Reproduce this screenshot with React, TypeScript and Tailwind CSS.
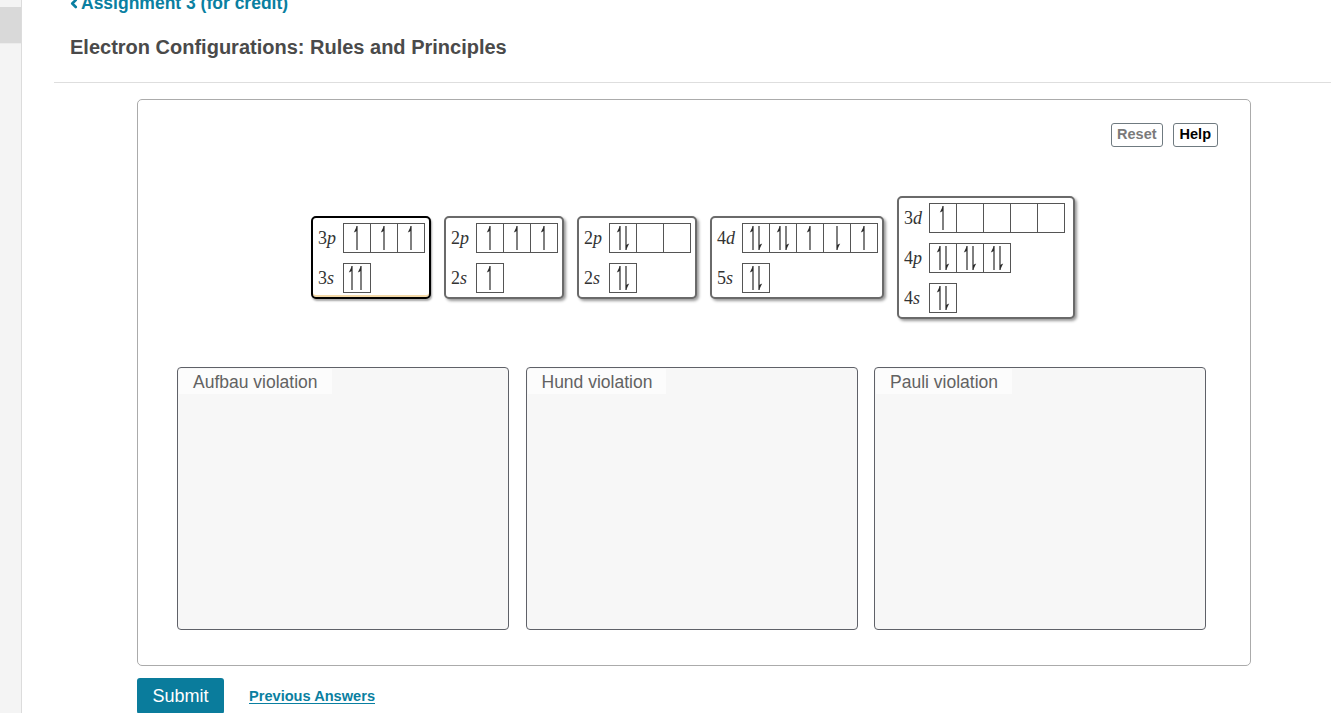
import React from 'react';
import { ChevronLeft } from 'lucide-react';

type Spin = '' | 'u' | 'd' | 'ud' | 'uu';

type Row = { n: string; l: string; boxes: Spin[] };

type TileDef = { rows: Row[]; selected?: boolean; extraRight?: boolean };

const tiles: TileDef[] = [
  {
    selected: true,
    rows: [
      { n: '3', l: 'p', boxes: ['u', 'u', 'u'] },
      { n: '3', l: 's', boxes: ['uu'] },
    ],
  },
  {
    rows: [
      { n: '2', l: 'p', boxes: ['u', 'u', 'u'] },
      { n: '2', l: 's', boxes: ['u'] },
    ],
  },
  {
    rows: [
      { n: '2', l: 'p', boxes: ['ud', '', ''] },
      { n: '2', l: 's', boxes: ['ud'] },
    ],
  },
  {
    rows: [
      { n: '4', l: 'd', boxes: ['ud', 'ud', 'u', 'd', 'u'] },
      { n: '5', l: 's', boxes: ['ud'] },
    ],
  },
  {
    extraRight: true,
    rows: [
      { n: '3', l: 'd', boxes: ['u', '', '', '', ''] },
      { n: '4', l: 'p', boxes: ['ud', 'ud', 'ud'] },
      { n: '4', l: 's', boxes: ['ud'] },
    ],
  },
];

const zones = ['Aufbau violation', 'Hund violation', 'Pauli violation'];

// half-headed arrows, like the textbook orbital boxes
const Up = ({ x }: { x: number }) => (
  <g>
    <line x1={x} y1={3} x2={x} y2={27} stroke="#2b2b2b" strokeWidth={1.2} />
    <path d={`M${x} 3 L${x - 3.2} 9.5 L${x} 8 Z`} fill="#2b2b2b" />
  </g>
);

const Down = ({ x }: { x: number }) => (
  <g>
    <line x1={x} y1={3} x2={x} y2={27} stroke="#2b2b2b" strokeWidth={1.2} />
    <path d={`M${x} 27 L${x + 3.2} 20.5 L${x} 22 Z`} fill="#2b2b2b" />
  </g>
);

const OrbitalBox = ({ spin, first }: { spin: Spin; first: boolean }) => (
  <div
    className={`w-[28px] h-[30px] border border-[#555] bg-white ${first ? '' : '-ml-px'}`}
  >
    <svg width="26" height="28" viewBox="1 1 26 28">
      {spin === 'u' && <Up x={14} />}
      {spin === 'd' && <Down x={14} />}
      {spin === 'ud' && (
        <>
          <Up x={11} />
          <Down x={17} />
        </>
      )}
      {spin === 'uu' && (
        <>
          <Up x={9} />
          <Up x={18} />
        </>
      )}
    </svg>
  </div>
);

const Tile = ({ tile }: { tile: TileDef }) => (
  <div
    className={`bg-white rounded-[5px] border-2 pt-[5px] pb-[4px] pl-[4px] ${
      tile.extraRight ? 'pr-[8px]' : 'pr-[4px]'
    } ${
      tile.selected
        ? 'border-black shadow-[inset_0_-2px_0_#f3d9a8,1px_2px_2px_rgba(0,0,0,0.35)]'
        : 'border-[#6a6a6a] shadow-[2px_2px_3px_rgba(0,0,0,0.4)]'
    }`}
  >
    <div className="flex flex-col gap-[10px]">
      {tile.rows.map((row, i) => (
        <div key={i} className="flex items-center">
          <div
            className="w-[26px] pl-[1px] text-[18px] text-[#333] leading-none"
            style={{ fontFamily: '"Liberation Serif", "DejaVu Serif", serif' }}
          >
            {row.n}
            <i>{row.l}</i>
          </div>
          <div className="flex">
            {row.boxes.map((s, j) => (
              <OrbitalBox key={j} spin={s} first={j === 0} />
            ))}
          </div>
        </div>
      ))}
    </div>
  </div>
);

const App: React.FC = () => {
  return (
    <div
      className="flex h-[713px] overflow-hidden bg-white"
      style={{ fontFamily: '"Liberation Sans", Arial, sans-serif' }}
    >
      {/* left rail */}
      <aside className="w-[22px] shrink-0 bg-[#f4f4f4] border-r border-[#dcdcdc]">
        <div className="mt-[7px] h-[37px] bg-[#d9d9d9] border-b border-[#ececec]" />
      </aside>

      <main className="flex-1 pl-[32px]">
        <div className="pl-[16px]">
          <a className="-mt-[7px] h-[20px] flex items-center text-[17.5px] leading-[20px] font-bold text-[#0a7fa1]">
            <ChevronLeft className="w-[14px] h-[17px] -ml-[3px] mr-[0px]" strokeWidth={4.5} />
            Assignment 3 (for credit)
          </a>
          <h1 className="mt-[22px] text-[20px] leading-[24px] font-bold text-[#4a4a4a]">
            Electron Configurations: Rules and Principles
          </h1>
        </div>

        <div className="mt-[23px] border-t border-[#dedede]" />

        <div className="ml-[83px] mr-[80px] mt-[16px]">
          <div className="border border-[#ababab] rounded-[5px] pt-[23px] pb-[35px]">
            <div className="flex justify-end gap-[10px] pr-[32px]">
              <button className="h-[24px] px-[5px] border border-[#6f7a80] rounded-[3px] text-[14.5px] font-bold text-[#7a7a7a]">
                Reset
              </button>
              <button className="h-[24px] px-[6px] border border-[#6f7a80] rounded-[3px] text-[14.5px] font-bold text-black">
                Help
              </button>
            </div>

            <div className="mt-[49px] flex justify-center items-center gap-[13px] pr-[2px]">
              {tiles.map((t, i) => (
                <Tile key={i} tile={t} />
              ))}
            </div>

            <div className="mt-[48px] flex gap-[16.5px] pl-[39px]">
              {zones.map((z) => (
                <div
                  key={z}
                  className="w-[332px] h-[263px] bg-[#f7f7f7] border border-[#5f6168] rounded-[4px] p-px"
                >
                  <div className="inline-block bg-[#fcfcfc] px-[14px] h-[25px] leading-[27px] text-[17.5px] text-[#626262]">
                    {z}
                  </div>
                </div>
              ))}
            </div>
          </div>

          <div className="mt-[12px] flex items-center">
            <button className="w-[87px] h-[36px] bg-[#0a7c9c] rounded-[3px] text-white text-[18px]">
              Submit
            </button>
            <a className="ml-[25px] mt-[1px] text-[14.6px] font-bold text-[#0a7fa1] underline underline-offset-2">
              Previous Answers
            </a>
          </div>
        </div>
      </main>
    </div>
  );
};

export default App;
